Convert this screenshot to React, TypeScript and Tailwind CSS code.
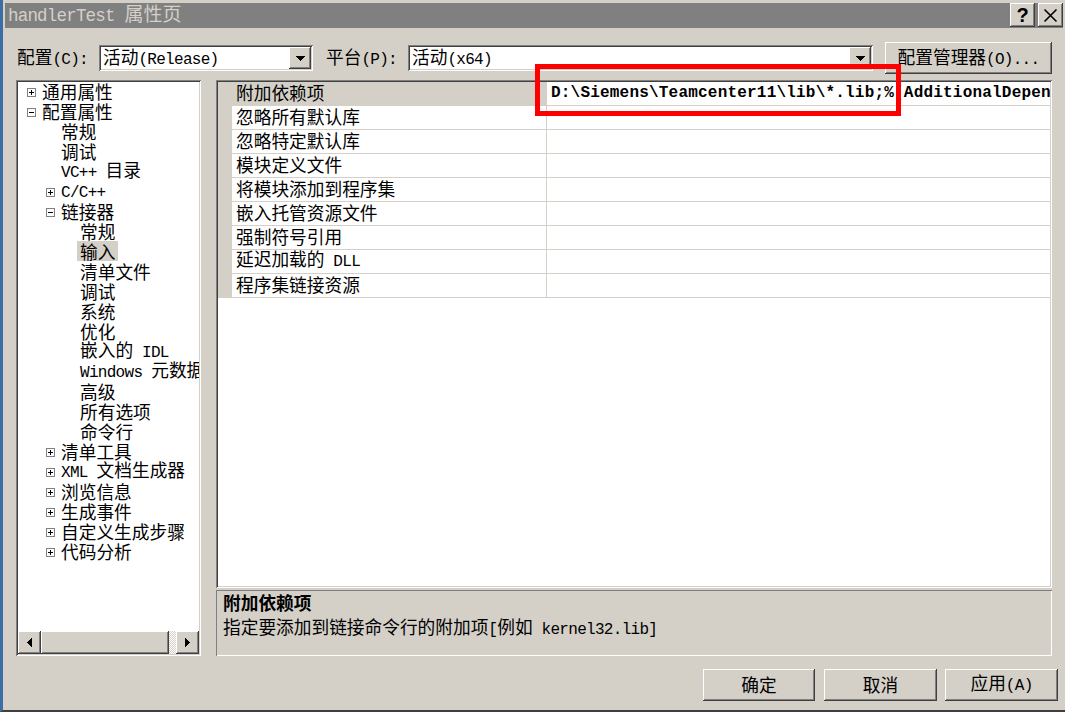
import React from 'react';

// classic win32 bevels
const SUNKEN =
  'shadow-[inset_1px_1px_0_#808080,inset_-1px_-1px_0_#ffffff,inset_2px_2px_0_#404040,inset_-2px_-2px_0_#d4d0c8]';
const RAISED =
  'shadow-[inset_-1px_-1px_0_#404040,inset_1px_1px_0_#ffffff,inset_-2px_-2px_0_#808080,inset_2px_2px_0_#d4d0c8]';

// half-width latin text, like SimSun's ascii glyphs
const M = ({ children, className = '' }: { children: React.ReactNode; className?: string }) => (
  <span className={`font-['Liberation_Mono',monospace] text-[16px] tracking-[-0.7px] ${className}`}>{children}</span>
);

const DownArrow = () => (
  <svg width="9" height="5" viewBox="0 0 9 5" shapeRendering="crispEdges">
    <polygon points="0,0 9,0 4.5,5" fill="#000" />
  </svg>
);

const Select = ({ width, children }: { width: string; children: React.ReactNode }) => (
  <div className={`${width} h-[26px] p-[2px] bg-white flex ${SUNKEN}`}>
    <div className="flex-1 flex items-center pl-[2px] pb-[1px] whitespace-nowrap overflow-hidden">
      <span>{children}</span>
    </div>
    <div className={`w-[22px] h-[22px] shrink-0 bg-[#d4d0c8] flex items-center justify-center ${RAISED}`}>
      <DownArrow />
    </div>
  </div>
);

const Box = ({ open }: { open: boolean }) => (
  <svg width="9" height="9" viewBox="0 0 9 9" shapeRendering="crispEdges">
    <rect x="0.5" y="0.5" width="8" height="8" fill="#fff" stroke="#808080" />
    <path d="M2 4.5h5" stroke="#000" />
    {!open && <path d="M4.5 2v5" stroke="#000" />}
  </svg>
);

type TreeItem = { l: 0 | 1 | 2; box?: '+' | '-'; label: React.ReactNode; sel?: boolean };

const tree: TreeItem[] = [
  { l: 0, box: '+', label: '通用属性' },
  { l: 0, box: '-', label: '配置属性' },
  { l: 1, label: '常规' },
  { l: 1, label: '调试' },
  { l: 1, label: <><M>VC++ </M>目录</> },
  { l: 1, box: '+', label: <M>C/C++</M> },
  { l: 1, box: '-', label: '链接器' },
  { l: 2, label: '常规' },
  { l: 2, label: '输入', sel: true },
  { l: 2, label: '清单文件' },
  { l: 2, label: '调试' },
  { l: 2, label: '系统' },
  { l: 2, label: '优化' },
  { l: 2, label: <>嵌入的<M> IDL</M></> },
  { l: 2, label: <><M>Windows </M>元数据</> },
  { l: 2, label: '高级' },
  { l: 2, label: '所有选项' },
  { l: 2, label: '命令行' },
  { l: 1, box: '+', label: '清单工具' },
  { l: 1, box: '+', label: <><M>XML </M>文档生成器</> },
  { l: 1, box: '+', label: '浏览信息' },
  { l: 1, box: '+', label: '生成事件' },
  { l: 1, box: '+', label: '自定义生成步骤' },
  { l: 1, box: '+', label: '代码分析' },
];

const indent = ['pl-[9px]', 'pl-[28px]', 'pl-[47px]'];

const props: React.ReactNode[] = [
  '附加依赖项',
  '忽略所有默认库',
  '忽略特定默认库',
  '模块定义文件',
  '将模块添加到程序集',
  '嵌入托管资源文件',
  '强制符号引用',
  <>延迟加载的<M> DLL</M></>,
  '程序集链接资源',
];

const ScrollBtn = ({ dir }: { dir: 'left' | 'right' }) => (
  <div className={`w-[23px] h-full shrink-0 bg-[#d4d0c8] flex items-center justify-center ${RAISED}`}>
    <svg width="5" height="9" viewBox="0 0 5 9" shapeRendering="crispEdges">
      {dir === 'left' ? (
        <polygon points="5,0 5,9 0,4.5" fill="#000" />
      ) : (
        <polygon points="0,0 0,9 5,4.5" fill="#000" />
      )}
    </svg>
  </div>
);

export default function App() {
  return (
    <div className="relative w-[1065px] h-[712px] overflow-hidden bg-[#d4d0c8] border-l-[3px] border-l-[#3a6ea5] border-b-2 border-b-[#404040] font-['Noto_Sans_CJK_SC',sans-serif] text-[17.7px] leading-[20px] text-black">
      {/* title bar */}
      <div className="ml-[2px] mt-[3px] w-[1058px] h-[25px] bg-[#808080] flex items-center">
        <div className="pl-[3px] pb-[2px] text-[#d4d0c8] text-[19px] whitespace-nowrap">
          <M className="text-[17.5px] tracking-[-0.8px]">handlerTest </M>属性页
        </div>
        <div className="ml-auto flex gap-[3px] self-start">
          <div className={`w-[25px] h-[24px] bg-[#d4d0c8] flex items-center justify-center font-['Liberation_Sans',sans-serif] font-bold text-[20px] ${RAISED}`}>
            ?
          </div>
          <div className={`w-[25px] h-[24px] bg-[#d4d0c8] flex items-center justify-center ${RAISED}`}>
            <svg width="15" height="15" viewBox="0 0 15 15">
              <path d="M1.5 1.5l12 12M13.5 1.5l-12 12" stroke="#000" strokeWidth="1.6" />
            </svg>
          </div>
        </div>
      </div>

      {/* config row */}
      <div className="mt-[14px] h-[32px] pl-[14px] flex items-center">
        <div className="w-[82px] pb-[1px] whitespace-nowrap">
          配置<M>(C):</M>
        </div>
        <Select width="w-[214px]">
          活动<M>(Release)</M>
        </Select>
        <div className="ml-[13px] w-[82px] pb-[1px] whitespace-nowrap">
          平台<M>(P):</M>
        </div>
        <Select width="w-[465px]">
          活动<M>(x64)</M>
        </Select>
        <button className={`ml-[12px] w-[167px] h-[32px] pb-[1px] bg-[#d4d0c8] whitespace-nowrap ${RAISED}`}>
          配置管理器<M>(O)...</M>
        </button>
      </div>

      {/* main */}
      <div className="mt-[6px] pl-[13px] flex h-[576px]">
        {/* tree */}
        <div className={`w-[185px] h-full p-[2px] bg-white flex flex-col ${SUNKEN}`}>
          <div className="flex-1 overflow-hidden">
            {tree.map((t, i) => (
              <div key={i} className={`h-[20px] pb-[3px] flex items-center whitespace-nowrap ${indent[t.l]}`}>
                <div className="w-[9px] h-[9px] mt-[3px] mr-[6px] shrink-0 flex">
                  {t.box && <Box open={t.box === '-'} />}
                </div>
                <span className={t.sel ? '-ml-[3px] px-[3px] bg-[#d4d0c8]' : ''}>{t.label}</span>
              </div>
            ))}
          </div>
          <div className="h-[23px] flex">
            <ScrollBtn dir="left" />
            <div className={`w-[128px] h-full shrink-0 bg-[#d4d0c8] ${RAISED}`} />
            <div className="w-[7px] h-full shrink-0 bg-[repeating-conic-gradient(#d4d0c8_0_25%,#ffffff_0_50%)] bg-[length:2px_2px]" />
            <ScrollBtn dir="right" />
          </div>
        </div>

        {/* right side */}
        <div className="ml-[15px] w-[836px] flex flex-col">
          <div className={`h-[508px] p-[2px] bg-white ${SUNKEN}`}>
            {props.map((p, i) => (
              <div key={i} className="h-[24px] flex">
                <div className="w-[14px] bg-[#d4d0c8]" />
                <div
                  className={`w-[314px] pl-[4px] pb-[3px] flex items-center whitespace-nowrap border-b border-[#d4d0c8] ${
                    i === 0 ? 'bg-[#d4d0c8]' : ''
                  }`}
                >
                  <span>{p}</span>
                </div>
                <div className="flex-1 pl-[4px] pb-[2px] flex items-center whitespace-nowrap overflow-hidden border-l border-b border-[#d4d0c8]">
                  {i === 0 && (
                    <M className="font-bold tracking-[0.2px]">
                      D:\Siemens\Teamcenter11\lib\*.lib;%(AdditionalDependencies)
                    </M>
                  )}
                </div>
              </div>
            ))}
          </div>
          <div className="mt-[2px] h-[66px] pl-[7px] pt-[2px] shadow-[inset_1px_1px_0_#808080,inset_-1px_-1px_0_#ffffff]">
            <div className="font-bold">附加依赖项</div>
            <div className="mt-[4px] whitespace-nowrap">
              指定要添加到链接命令行的附加项<M>[</M>例如<M> kernel32.lib]</M>
            </div>
          </div>
        </div>
      </div>

      {/* bottom buttons */}
      <div className="mt-[13px] flex">
        <button className={`ml-[700px] w-[112px] h-[32px] pb-[2px] bg-[#d4d0c8] ${RAISED}`}>确定</button>
        <button className={`ml-[9px] w-[113px] h-[32px] pb-[2px] bg-[#d4d0c8] ${RAISED}`}>取消</button>
        <button className={`ml-[8px] w-[113px] h-[32px] pb-[2px] bg-[#d4d0c8] ${RAISED}`}>
          应用<M>(A)</M>
        </button>
      </div>

      {/* red annotation box */}
      <div className="absolute left-[532px] top-[64px] w-[366px] h-[52px] border-[5px] border-[#ff0000]" />
    </div>
  );
}
